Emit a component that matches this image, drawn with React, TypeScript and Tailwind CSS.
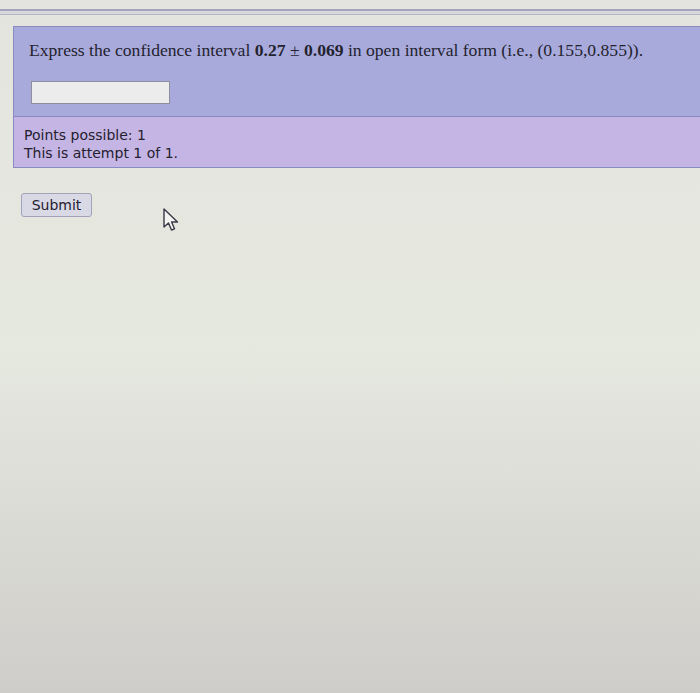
import React from "react";

function Cursor() {
	return (
		<svg
			className="absolute left-[162px] top-[207px]"
			width="18"
			height="25"
			viewBox="0 0 18 25"
			fill="none"
		>
			<path
				d="M2 2 L2 20 L6.5 16 L9.5 23 L12.5 21.8 L9.6 15 L15.5 15 Z"
				fill="#f4f4f2"
				stroke="#3a3a48"
				strokeWidth="1.4"
				strokeLinejoin="round"
			/>
		</svg>
	);
}

export default function App() {
	return (
		<div className="relative h-[693px] w-full overflow-hidden bg-gradient-to-b from-[#e4e4de] via-[#e6e9e0] to-[#cfcdca]">
			{/* browser chrome remnants */}
			<div className="h-[9px] bg-[#e3e3df]" />
			<div className="h-[2px] bg-[#a3a3bb]" />
			<div className="h-[3px] bg-[#d8d8dc]" />
			<div className="h-px bg-[#b4b4c6]" />

			<div className="ml-[13px] -mr-[4px] pt-[11px]">
				<div className="border border-[#8a8ac2] bg-[#a9aadc] pb-[12px] pl-[15px] pt-[12px]">
					<p className="font-['Liberation_Serif',serif] text-[17.6px] leading-[22px] text-[#23232f]">
						Express the confidence interval <b>0.27</b> ± <b>0.069</b> in open interval form (i.e.,
						(0.155,0.855)).
					</p>
					<input
						type="text"
						className="mt-[20px] ml-[2px] block h-[23px] w-[139px] border border-[#8e8e9e] bg-[#ececec] outline-none"
					/>
				</div>
				<div className="border border-t-0 border-[#8a8ac2] bg-[#c4b5e4] pb-[5px] pl-[10px] pt-[9px] font-['DejaVu_Sans',sans-serif] text-[14px] leading-[18px] text-[#24202e]">
					<div>Points possible: 1</div>
					<div>This is attempt 1 of 1.</div>
				</div>

				<button className="ml-[8px] mt-[25px] h-[24px] w-[71px] rounded-[3px] border border-[#a2a2ba] bg-[#d9d9e6] font-['DejaVu_Sans',sans-serif] text-[14px] text-[#24202e]">
					Submit
				</button>
			</div>

			<Cursor />
		</div>
	);
}
